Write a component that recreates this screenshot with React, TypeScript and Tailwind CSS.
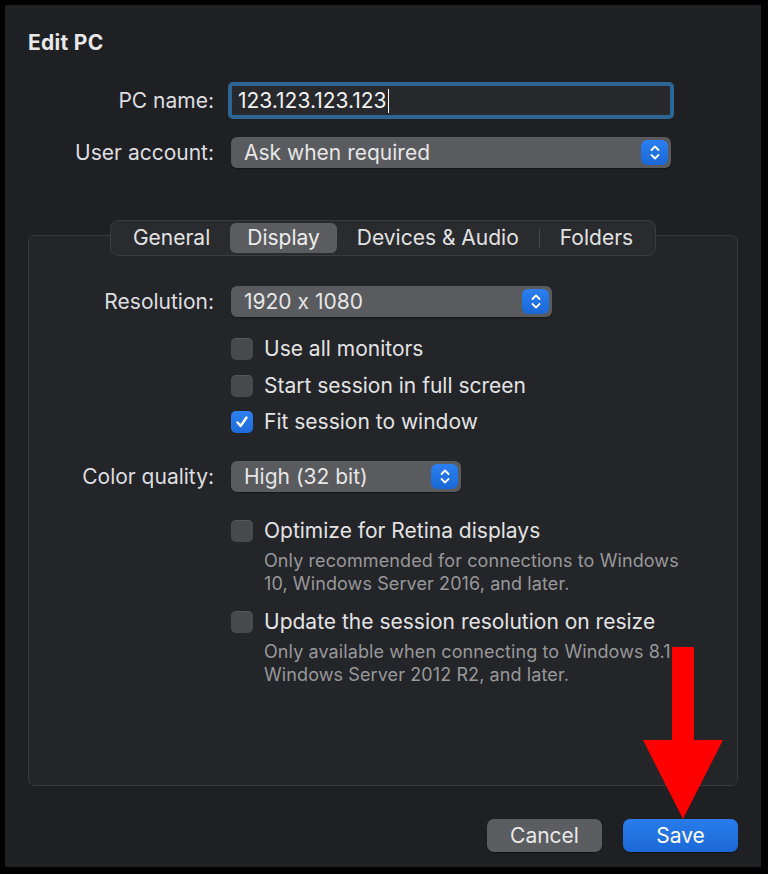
import React from "react";

const font = { fontFamily: "Inter, 'Noto Sans', sans-serif" };

function Stepper() {
    return (
        <span className="flex h-[25px] w-[27px] items-center justify-center rounded-[6px] bg-gradient-to-b from-[#2b7ff0] to-[#1a68d6]">
            <svg width="12" height="17" viewBox="0 0 12 17" fill="none" stroke="white" strokeWidth="1.8" strokeLinecap="round" strokeLinejoin="round">
                <path d="M2.5 6 6 2.5 9.5 6" />
                <path d="M2.5 11 6 14.5 9.5 11" />
            </svg>
        </span>
    );
}

function Popup({ value, width }: { value: string; width: string }) {
    return (
        <div className={`flex h-[31px] items-center justify-between rounded-[6px] bg-[#5a5b5e] pl-[13px] pr-[3px] shadow-[0_1px_1px_rgba(0,0,0,0.4)] ${width}`}>
            <span className="text-[21px] leading-[26px] text-[#e6e6e7]">{value}</span>
            <Stepper />
        </div>
    );
}

function Checkbox({ checked }: { checked?: boolean }) {
    if (checked) {
        return (
            <span className="flex h-[22px] w-[22px] shrink-0 items-center justify-center rounded-[5px] bg-gradient-to-b from-[#2d80f0] to-[#1c6bd8]">
                <svg width="14" height="14" viewBox="0 0 14 14" fill="none" stroke="white" strokeWidth="2.4" strokeLinecap="round" strokeLinejoin="round">
                    <path d="M2.5 7.5 5.6 11 11.5 2.5" />
                </svg>
            </span>
        );
    }
    return <span className="h-[22px] w-[22px] shrink-0 rounded-[5px] bg-[#48494c] shadow-[inset_0_1px_0_rgba(255,255,255,0.08)]" />;
}

function CheckRow({ label, checked }: { label: string; checked?: boolean }) {
    return (
        <div className="flex h-[24px] items-center gap-[11px]">
            <Checkbox checked={checked} />
            <span className="text-[21px] leading-[26px] text-[#e3e3e4]">{label}</span>
        </div>
    );
}

export default function App() {
    const tabs = ["General", "Display", "Devices & Audio", "Folders"];

    return (
        <div className="relative h-[874px] w-[768px] bg-black pl-[5px] pt-[5px] [font-feature-settings:'calt'_0]" style={font}>
            <div className="flex h-[862px] w-[756px] flex-col bg-[#1f2023] pl-[23px] pr-[23px] pt-[26px]">
                <h1 className="text-[21px] font-bold leading-[24px] tracking-[0.3px] text-[#e8e8e9]">Edit PC</h1>

                {/* top form */}
                <div className="mt-[27px] flex items-center">
                    <span className="w-[186px] text-right text-[21px] leading-[26px] text-[#dedee0]">PC name:</span>
                    <div className="ml-[14px] flex h-[37px] w-[446px] items-center rounded-[5px] border-[4px] border-[#2d6594] bg-[#28292c] pl-[6px]">
                        <span className="text-[21px] leading-[26px] text-[#f2f2f3]">123.123.123.123</span>
                        <span className="ml-[1px] h-[24px] w-[1.5px] bg-white" />
                    </div>
                </div>
                <div className="mt-[18px] flex items-center">
                    <span className="w-[186px] text-right text-[21px] leading-[26px] text-[#dedee0]">User account:</span>
                    <div className="ml-[17px]">
                        <Popup value="Ask when required" width="w-[440px]" />
                    </div>
                </div>

                {/* group box with tabs */}
                <div className="mt-[67px] flex h-[551px] flex-col rounded-[7px] border border-[#38393c] bg-[#242528]">
                    <div className="-mt-[16px] flex h-[36px] self-center rounded-[8px] border border-[#3a3b3e] bg-[#2a2b2e] p-[2px]">
                        {tabs.map((t, i) => (
                            <div key={t} className="flex items-center">
                                {i === 3 && <span className="h-[20px] w-px bg-[#46474a]" />}
                                <span
                                    className={
                                        i === 1
                                            ? "flex h-full items-center rounded-[6px] bg-[#5b5c5f] px-[17px] text-[21px] text-[#ececed]"
                                            : "flex h-full items-center px-[20px] text-[21px] text-[#e2e2e3]"
                                    }
                                >
                                    {t}
                                </span>
                            </div>
                        ))}
                    </div>

                    <div className="mt-[30px] flex items-center">
                        <span className="w-[185px] text-right text-[21px] leading-[26px] text-[#dedee0]">Resolution:</span>
                        <div className="ml-[17px]">
                            <Popup value="1920 x 1080" width="w-[321px]" />
                        </div>
                    </div>

                    <div className="ml-[202px] mt-[20px] flex flex-col gap-[12.5px]">
                        <CheckRow label="Use all monitors" />
                        <CheckRow label="Start session in full screen" />
                        <CheckRow label="Fit session to window" checked />
                    </div>

                    <div className="mt-[27px] flex items-center">
                        <span className="w-[185px] text-right text-[21px] leading-[26px] text-[#dedee0]">Color quality:</span>
                        <div className="ml-[17px]">
                            <Popup value="High (32 bit)" width="w-[230px]" />
                        </div>
                    </div>

                    <div className="ml-[202px] mt-[27px] flex flex-col">
                        <CheckRow label="Optimize for Retina displays" />
                        <p className="ml-[33px] mt-[6px] text-[18px] leading-[23px] tracking-[0.1px] text-[#98989b]">
                            Only recommended for connections to Windows
                            <br />
                            10, Windows Server 2016, and later.
                        </p>
                        <div className="mt-[15px]">
                            <CheckRow label="Update the session resolution on resize" />
                        </div>
                        <p className="ml-[33px] mt-[6px] text-[18px] leading-[23px] tracking-[0.1px] text-[#98989b]">
                            Only available when connecting to Windows 8.1
                            <br />
                            Windows Server 2012 R2, and later.
                        </p>
                    </div>
                </div>

                {/* buttons */}
                <div className="mt-[33px] flex justify-end gap-[21px]">
                    <button className="h-[33px] w-[115px] rounded-[7px] bg-[#5c5d60] text-[21px] text-[#e8e8e9] shadow-[0_1px_1px_rgba(0,0,0,0.4)]">
                        Cancel
                    </button>
                    <button className="h-[33px] w-[115px] rounded-[7px] bg-gradient-to-b from-[#2a7cec] to-[#1b69d6] text-[21px] text-white shadow-[0_1px_1px_rgba(0,0,0,0.4)]">
                        Save
                    </button>
                </div>
            </div>

            {/* red annotation arrow */}
            <svg className="absolute left-[640px] top-[645px]" width="88" height="178" viewBox="0 0 88 178">
                <polygon points="32,2 54,2 54,95 83,95 43,174 3,95 32,95" fill="#ff0000" />
            </svg>
        </div>
    );
}
